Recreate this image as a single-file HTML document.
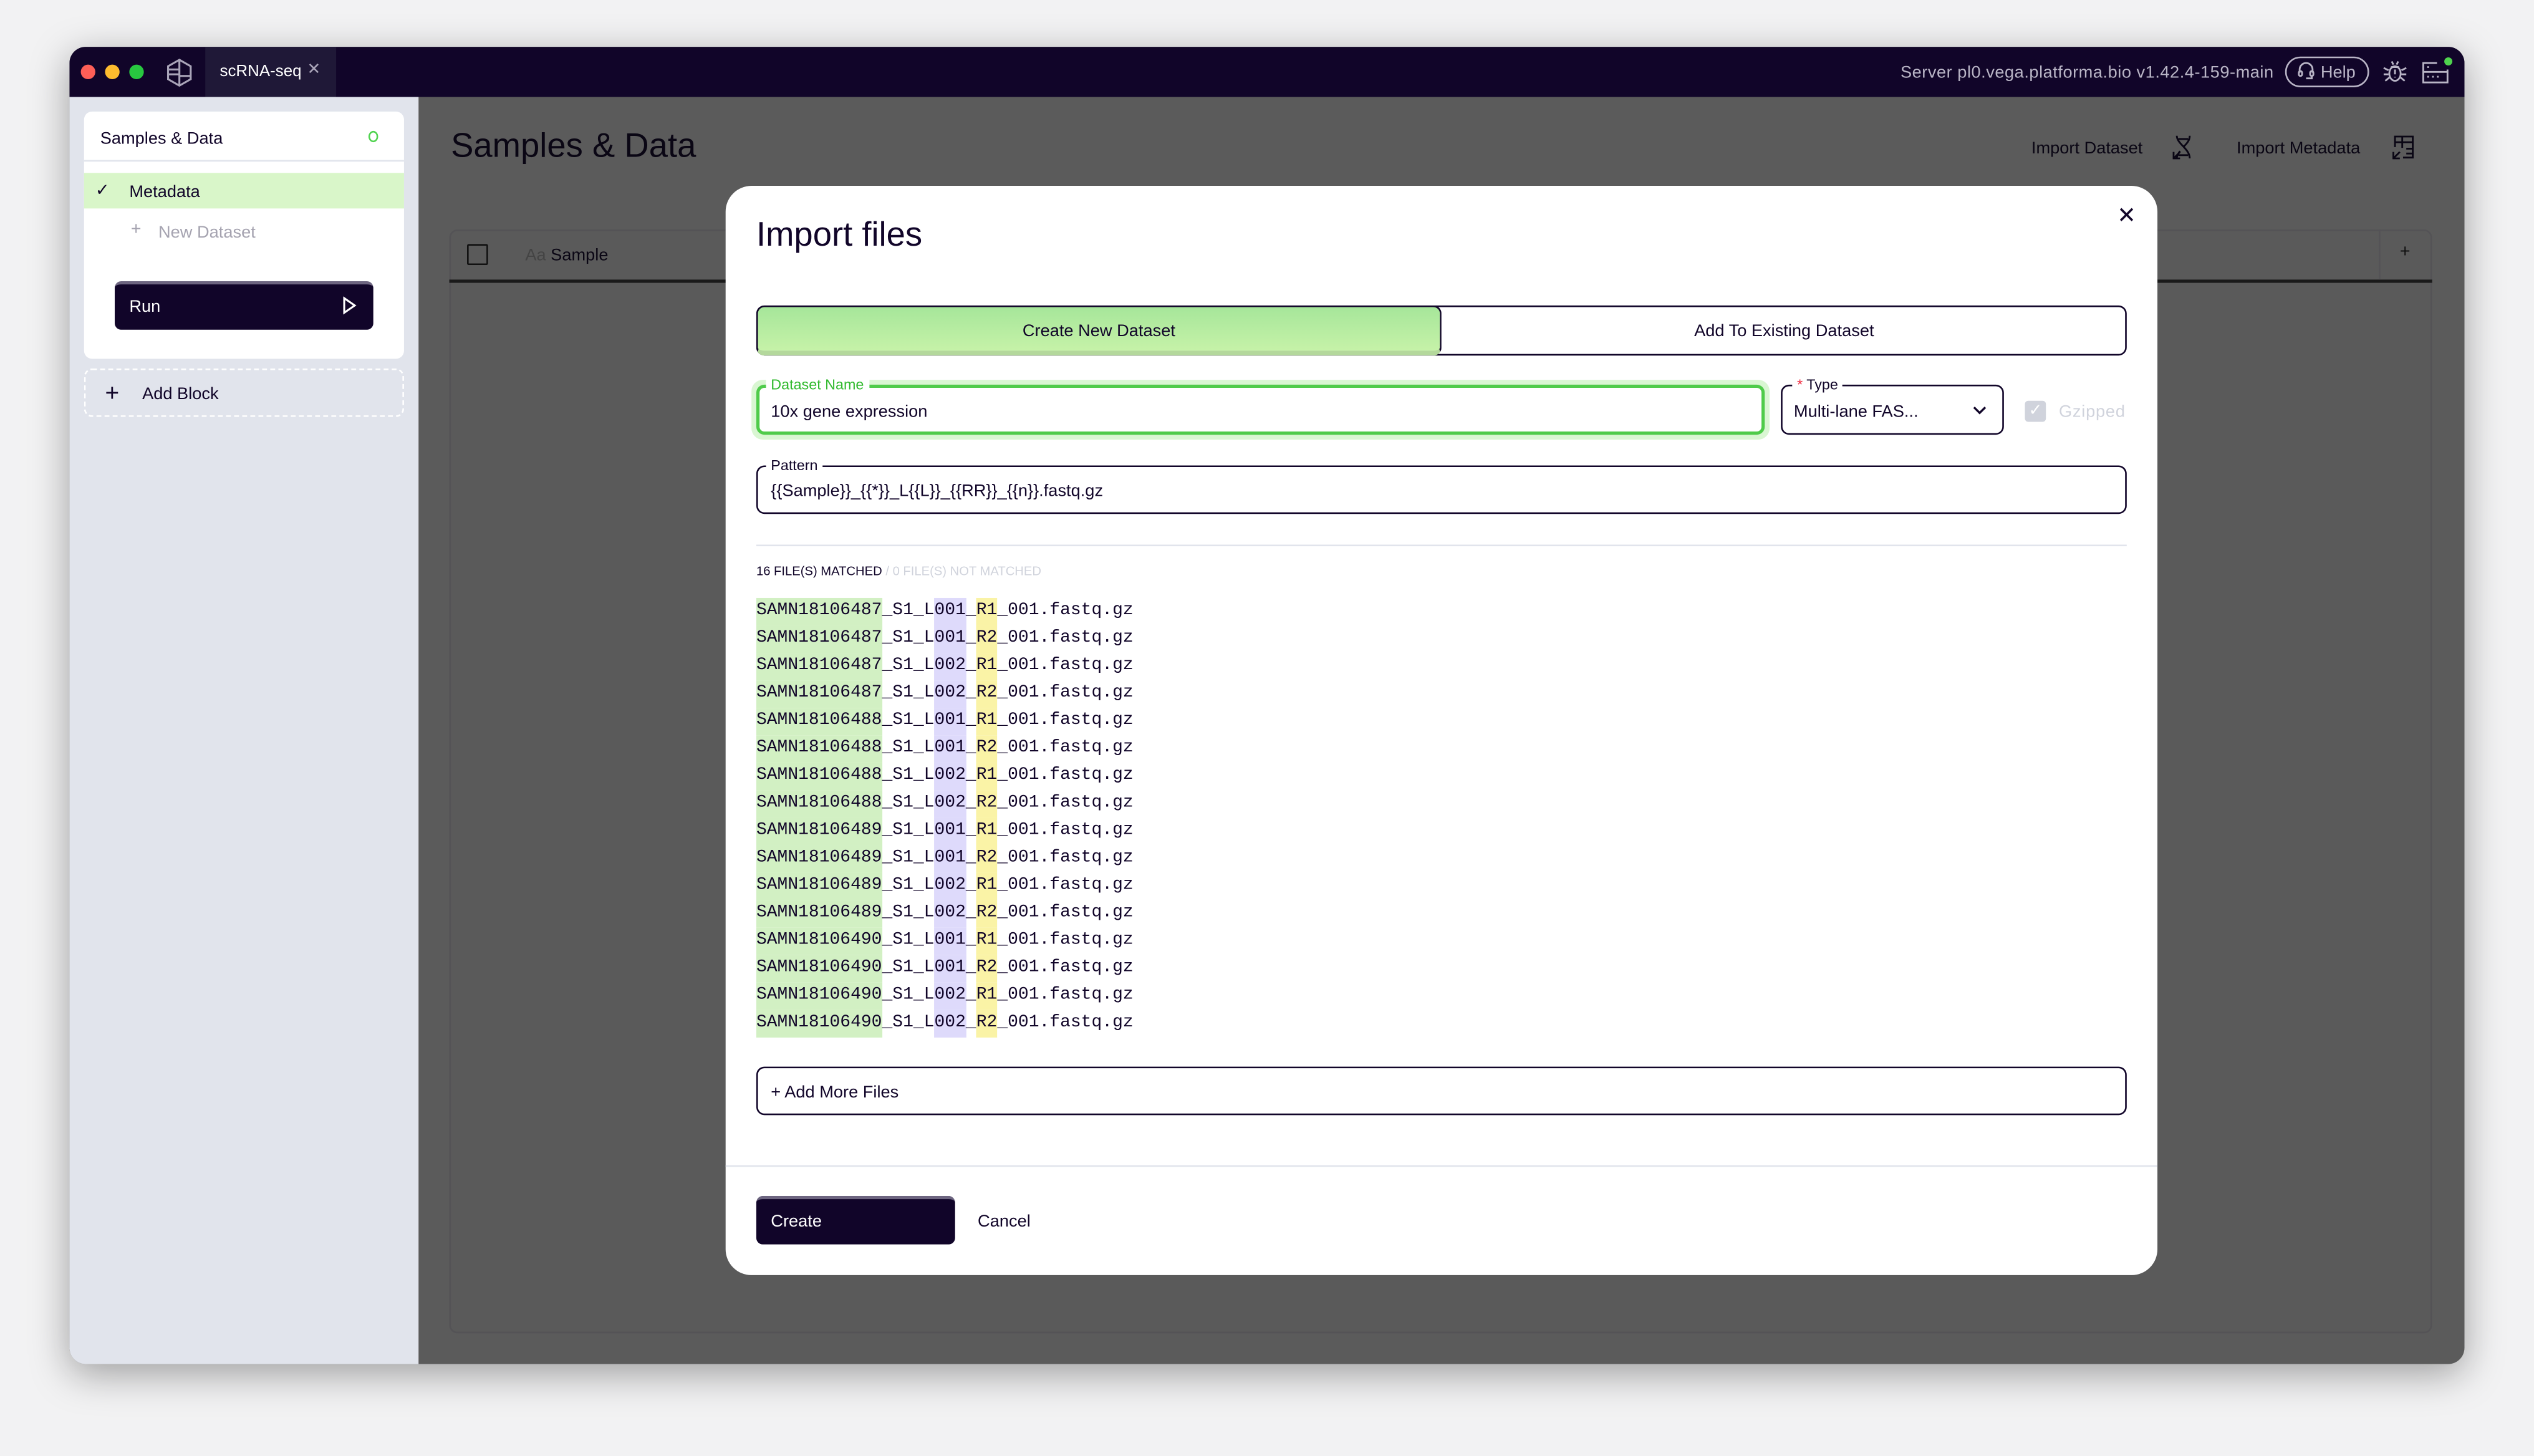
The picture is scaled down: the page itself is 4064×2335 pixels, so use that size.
<!DOCTYPE html>
<html><head><meta charset="utf-8"><style>
*{box-sizing:border-box;margin:0;padding:0}
html,body{width:4064px;height:2334px;overflow:hidden;background:#f2f2f3}
#s{position:absolute;left:0;top:0;width:1568px;height:901px;transform:scale(2.5918);transform-origin:0 0;font-family:"Liberation Sans",sans-serif;color:#110529}
.a{position:absolute}
.win{left:43px;top:29px;width:1482px;height:815px;border-radius:10px;overflow:hidden;background:#5b5b5b;box-shadow:0 6px 24px rgba(0,0,0,.35)}
.tb{left:0;top:0;width:1482px;height:31px;background:#110529}
.dot{width:9px;height:9px;border-radius:50%;top:11px}
.t{white-space:nowrap}
.fld{border:1px solid #110529;border-radius:5px;background:#fff}
.lbl{font-size:9px;background:#fff;padding:0 3px;top:-6px;left:6px;line-height:11px}
.mono{font-family:"Liberation Mono",monospace;font-size:10.8px;color:#110529}
.ln{height:17px;line-height:17px;white-space:pre}
.ln span{display:inline-block;height:17px}
.g{background:#d2f0c3}.p{background:#dedafb}.y{background:#faf3a6}
</style></head><body><div id="s">
<div class="a win">
 <div class="a tb">
  <div class="a dot" style="left:7px;background:#fe5f57"></div>
  <div class="a dot" style="left:22px;background:#febc2e"></div>
  <div class="a dot" style="left:37px;background:#28c840"></div>
  <svg class="a" style="left:59px;top:7px" width="18" height="18" viewBox="0 0 18 18" fill="none" stroke="#a9a4b8" stroke-width="1.2"><path d="M9 1L16 5V13L9 17L2 13V5Z"/><path d="M9 1V17M2 7H9M2 10H9M9 11H16"/></svg>
  <div class="a" style="left:84px;top:0;width:81px;height:31px;background:#1f1837"></div>
  <div class="a t" style="left:93px;top:10px;font-size:10px;color:#fff">scRNA-seq</div>
  <div class="a t" style="left:147px;top:9px;font-size:10px;font-weight:300;color:#a9a4b8">✕</div>
  <div class="a t" style="left:1133px;top:10px;font-size:10.5px;letter-spacing:.2px;color:#b9b5c6">Server pl0.vega.platforma.bio v1.42.4-159-main</div>
  <div class="a" style="left:1371px;top:6px;width:52px;height:19px;border:1px solid #b9b5c6;border-radius:10px"></div>
  <svg class="a" style="left:1378px;top:9px" width="12" height="12" viewBox="0 0 12 12" fill="none" stroke="#b9b5c6" stroke-width="1.1"><path d="M2 7V5a4 4 0 0 1 8 0v2"/><rect x="1.5" y="6" width="2" height="3" rx="1"/><rect x="8.5" y="6" width="2" height="3" rx="1"/><path d="M9.5 9v1.5H6"/></svg>
  <div class="a t" style="left:1393px;top:10px;font-size:10.5px;color:#b9b5c6">Help</div>
  <svg class="a" style="left:1431px;top:7px" width="16" height="16" viewBox="0 0 16 16" fill="none" stroke="#b9b5c6" stroke-width="1.1"><ellipse cx="8" cy="9.5" rx="3.5" ry="4.5"/><path d="M5.5 5.5h5M6 2l1 2M10 2l-1 2M1 6l3 1.5M15 6l-3 1.5M1 10h3M15 10h-3M2 14l2.5-2M14 14l-2.5-2M8 7v3M8 11.5v.5"/></svg>
  <svg class="a" style="left:1455px;top:6px" width="20" height="18" viewBox="0 0 20 18" fill="none" stroke="#b9b5c6" stroke-width="1.1"><path d="M10 4H1.5v12h15V8"/><path d="M1.5 9.5h15M4 6.5h1M7 6.5h0M4 12.5h1M7 12.5h1M10 12.5h1"/><circle cx="17" cy="3" r="2.5" fill="#4fd34e" stroke="none"/></svg>
 </div>
 <div class="a" style="left:0;top:31px;width:216px;height:784px;background:#e1e4ec"></div>
 <div class="a" style="left:9px;top:40px;width:198px;height:153px;background:#fff;border-radius:5px"></div>
 <div class="a t" style="left:19px;top:51px;font-size:10.5px">Samples &amp; Data</div>
 <div class="a" style="left:185px;top:52px;width:6px;height:7px;border:1.3px solid #4fd34e;border-radius:50%"></div>
 <div class="a" style="left:9px;top:70px;width:198px;height:1px;background:#e1e4ec"></div>
 <div class="a" style="left:9px;top:78px;width:198px;height:22px;background:#d9f6c9"></div>
 <div class="a t" style="left:16px;top:83px;font-size:10.5px">✓</div>
 <div class="a t" style="left:37px;top:84px;font-size:10.5px">Metadata</div>
 <div class="a t" style="left:38px;top:107px;font-size:11px;color:#a5a3b0">+</div>
 <div class="a t" style="left:55px;top:109px;font-size:10.5px;color:#a5a3b0">New Dataset</div>
 <div class="a" style="left:28px;top:145px;width:160px;height:30px;background:#110529;border-radius:4px;border-top:2px solid #6d6580"></div>
 <div class="a t" style="left:37px;top:155px;font-size:10.5px;color:#fff">Run</div>
 <svg class="a" style="left:168px;top:154px" width="10" height="12" viewBox="0 0 10 12" fill="none" stroke="#fff" stroke-width="1.2"><path d="M2 1.5L8.5 6L2 10.5Z"/></svg>
 <div class="a" style="left:9px;top:199px;width:198px;height:30px;border:1px dashed #fff;border-radius:5px"></div>
 <div class="a t" style="left:22px;top:206px;font-size:15px;font-weight:300">+</div>
 <div class="a t" style="left:45px;top:209px;font-size:10.5px">Add Block</div>
 <div class="a t" style="left:236px;top:50px;font-size:21px;color:#0a0614">Samples &amp; Data</div>
 <div class="a t" style="left:1214px;top:57px;font-size:10.5px;color:#0a0614">Import Dataset</div>
 <svg class="a" style="left:1300px;top:54px" width="16" height="16" viewBox="0 0 16 16" fill="none" stroke="#0a0614" stroke-width="1.1"><path d="M4 1c0 5 8 8 8 14M12 1c0 3-2 5-4 7M4 15c0-2 1-3 2-4.5M5 3h6M5 13h6M2 15l4-4M2 11v4h4"/></svg>
 <div class="a t" style="left:1341px;top:57px;font-size:10.5px;color:#0a0614">Import Metadata</div>
 <svg class="a" style="left:1436px;top:54px" width="16" height="16" viewBox="0 0 16 16" fill="none" stroke="#0a0614" stroke-width="1.1"><path d="M3 8V1.5h11v13H8M3 5h11M7.5 1.5v7M10 9h4M10 12h4M2 15l4-4M2 11v4h4"/></svg>
 <div class="a" style="left:235px;top:113px;width:1227px;height:683px;border:1px solid #545356;border-radius:5px;background:#5a5a5a"></div>
 <div class="a" style="left:235px;top:144px;width:1227px;height:1.5px;background:#1a1a1a"></div>
 <div class="a" style="left:246px;top:122px;width:13px;height:13px;border:1.3px solid #111;border-radius:1px"></div>
 <div class="a t" style="left:282px;top:123px;font-size:10.5px;color:#0a0614"><span style="color:#444">Aa</span> Sample</div>
 <div class="a t" style="left:1442px;top:121px;font-size:11px;color:#111">+</div>
 <div class="a" style="left:1429px;top:113px;width:1px;height:31px;background:#545356"></div>
 <div class="a" style="left:406px;top:86px;width:886px;height:674px;background:#fff;border-radius:16px"></div>
 <div class="a t" style="left:425px;top:105px;font-size:21px">Import files</div>
 <div class="a t" style="left:1267px;top:96px;font-size:14px;font-weight:300">✕</div>
 <div class="a" style="left:425px;top:160px;width:848px;height:31px;border:1px solid #110529;border-radius:5px"></div>
 <div class="a" style="left:425px;top:160px;width:424px;height:31px;border:1px solid #110529;border-radius:5px;background:linear-gradient(#a6e69a,#c6f2a8);border-bottom:3px solid #b4d89c"></div>
 <div class="a t" style="left:425px;top:170px;width:424px;text-align:center;font-size:10.5px">Create New Dataset</div>
 <div class="a t" style="left:849px;top:170px;width:424px;text-align:center;font-size:10.5px">Add To Existing Dataset</div>
 <div class="a" style="left:422px;top:206px;width:630px;height:37px;background:#d9f6d2;border-radius:7px"></div>
 <div class="a fld" style="left:425px;top:209px;width:624px;height:31px;border:2px solid #4fcb4a"><div class="a lbl t" style="color:#2fb92c;top:-7px;left:4px">Dataset Name</div></div>
 <div class="a t" style="left:434px;top:220px;font-size:10.5px">10x gene expression</div>
 <div class="a fld" style="left:1059px;top:209px;width:138px;height:31px"><div class="a lbl t"><span style="color:#f0243a">*</span> Type</div></div>
 <div class="a t" style="left:1067px;top:220px;font-size:10.5px">Multi-lane FAS...</div>
 <svg class="a" style="left:1177px;top:221px" width="10" height="8" viewBox="0 0 10 8" fill="none" stroke="#110529" stroke-width="1.3"><path d="M1.5 2L5 5.5L8.5 2"/></svg>
 <div class="a" style="left:1210px;top:219px;width:13px;height:13px;background:#d0d3dc;border-radius:2px;color:#fff;font-size:10px;text-align:center;line-height:13px">✓</div>
 <div class="a t" style="left:1231px;top:220px;font-size:10.5px;color:#d0d3dc;letter-spacing:.3px">Gzipped</div>
 <div class="a fld" style="left:425px;top:259px;width:848px;height:30px"><div class="a lbl t" style="left:5px">Pattern</div></div>
 <div class="a t" style="left:434px;top:269px;font-size:10.5px">{{Sample}}_{{*}}_L{{L}}_{{RR}}_{{n}}.fastq.gz</div>
 <div class="a" style="left:425px;top:308px;width:848px;height:1px;background:#e1e4ec"></div>
 <div class="a t" style="left:425px;top:320px;font-size:7.8px"><span>16 FILE(S) MATCHED</span> <span style="color:#d0d3dc">/ 0 FILE(S) NOT MATCHED</span></div>
 <div class="a mono" style="left:425px;top:341px">
<div class="ln"><span class="g">SAMN18106487</span>_S1_L<span class="p">001</span>_<span class="y">R1</span>_001.fastq.gz</div>
<div class="ln"><span class="g">SAMN18106487</span>_S1_L<span class="p">001</span>_<span class="y">R2</span>_001.fastq.gz</div>
<div class="ln"><span class="g">SAMN18106487</span>_S1_L<span class="p">002</span>_<span class="y">R1</span>_001.fastq.gz</div>
<div class="ln"><span class="g">SAMN18106487</span>_S1_L<span class="p">002</span>_<span class="y">R2</span>_001.fastq.gz</div>
<div class="ln"><span class="g">SAMN18106488</span>_S1_L<span class="p">001</span>_<span class="y">R1</span>_001.fastq.gz</div>
<div class="ln"><span class="g">SAMN18106488</span>_S1_L<span class="p">001</span>_<span class="y">R2</span>_001.fastq.gz</div>
<div class="ln"><span class="g">SAMN18106488</span>_S1_L<span class="p">002</span>_<span class="y">R1</span>_001.fastq.gz</div>
<div class="ln"><span class="g">SAMN18106488</span>_S1_L<span class="p">002</span>_<span class="y">R2</span>_001.fastq.gz</div>
<div class="ln"><span class="g">SAMN18106489</span>_S1_L<span class="p">001</span>_<span class="y">R1</span>_001.fastq.gz</div>
<div class="ln"><span class="g">SAMN18106489</span>_S1_L<span class="p">001</span>_<span class="y">R2</span>_001.fastq.gz</div>
<div class="ln"><span class="g">SAMN18106489</span>_S1_L<span class="p">002</span>_<span class="y">R1</span>_001.fastq.gz</div>
<div class="ln"><span class="g">SAMN18106489</span>_S1_L<span class="p">002</span>_<span class="y">R2</span>_001.fastq.gz</div>
<div class="ln"><span class="g">SAMN18106490</span>_S1_L<span class="p">001</span>_<span class="y">R1</span>_001.fastq.gz</div>
<div class="ln"><span class="g">SAMN18106490</span>_S1_L<span class="p">001</span>_<span class="y">R2</span>_001.fastq.gz</div>
<div class="ln"><span class="g">SAMN18106490</span>_S1_L<span class="p">002</span>_<span class="y">R1</span>_001.fastq.gz</div>
<div class="ln"><span class="g">SAMN18106490</span>_S1_L<span class="p">002</span>_<span class="y">R2</span>_001.fastq.gz</div>
 </div>
 <div class="a fld" style="left:425px;top:631px;width:848px;height:30px"></div>
 <div class="a t" style="left:434px;top:641px;font-size:10.5px">+ Add More Files</div>
 <div class="a" style="left:406px;top:692px;width:886px;height:1px;background:#e1e4ec"></div>
 <div class="a" style="left:425px;top:711px;width:123px;height:30px;background:#110529;border-radius:4px;border-top:2px solid #6d6580"></div>
 <div class="a t" style="left:434px;top:721px;font-size:10.5px;color:#fff">Create</div>
 <div class="a t" style="left:562px;top:721px;font-size:10.5px">Cancel</div>
</div>
</div></body></html>
